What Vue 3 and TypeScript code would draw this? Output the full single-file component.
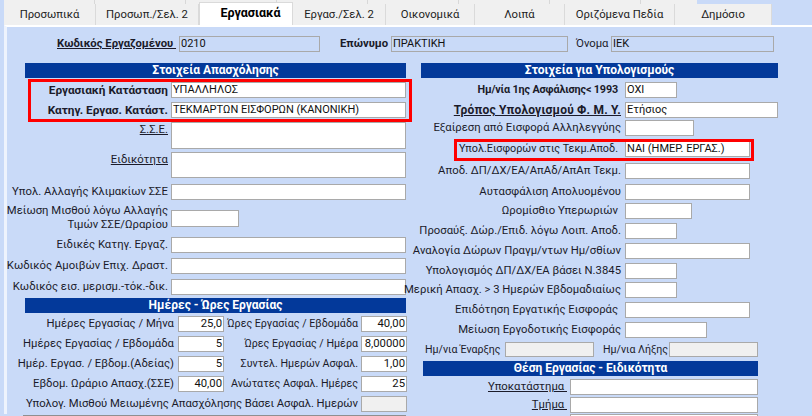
<script setup lang="ts">
type Row = { label: string; value?: string; top?: string; w?: string; h?: string; bold?: boolean; link?: boolean; boxed?: boolean; fit?: string }

const tabs = ['Προσωπικά', 'Προσωπ./Σελ. 2', 'Εργασιακά', 'Εργασ./Σελ. 2', 'Οικονομικά', 'Λοιπά', 'Οριζόμενα Πεδία', 'Δημόσιο']

const leftRows: Row[] = [
  { label: 'Σ.Σ.Ε.', link: true, h: 'h27' },
  { label: 'Ειδικότητα', link: true, h: 'h26', top: 'mt3' },
  { label: 'Υπολ. Αλλαγής Κλιμακίων ΣΣΕ', top: 'mt6' },
  { label: 'Μείωση Μισθού λόγω Αλλαγής Τιμών ΣΣΕ/Ωραρίου', w: 'w68', h: 'h17', top: 'mt4 tall' },
  { label: 'Ειδικές Κατηγ. Εργαζ.', top: 'mt5' },
  { label: 'Κωδικός Αμοιβών Επιχ. Δραστ.', top: 'mt5' },
  { label: 'Κωδικός εισ. μερισμ.-τόκ.-δικ.', top: 'mt5' }
]

const hours = [
  { a: 'Ημέρες Εργασίας / Μήνα', av: '25,0', b: 'Ώρες Εργασίας / Εβδομάδα', bv: '40,00' },
  { a: 'Ημέρες Εργασίας / Εβδομάδα', av: '5', b: 'Ώρες Εργασίας / Ημέρα', bv: '8,00000' },
  { a: 'Ημέρ. Εργασ. / Εβδομ.(Αδείας)', av: '5', b: 'Συντελ. Ημερών Ασφαλ.', bv: '1,00' },
  { a: 'Εβδομ. Ωράριο Απασχ.(ΣΣΕ)', av: '40,00', b: 'Ανώτατες Ασφαλ. Ημέρες', bv: '25' }
]

const rightTop: Row[] = [
  { label: 'Ημ/νία 1ης Ασφάλισης< 1993', value: 'ΟΧΙ', w: 'w52', bold: true, fit: 'tight inset' },
  { label: 'Τρόπος Υπολογισμού Φ. Μ. Υ.', value: 'Ετήσιος', w: 'w153', bold: true, link: true, top: 'mt4', fit: 'loose' },
  { label: 'Εξαίρεση από Εισφορά Αλληλεγγύης', w: 'w69', top: 'mt2' },
  { label: 'Υπολ.Εισφορών στις Τεκμ.Αποδ.', value: 'ΝΑΙ (ΗΜΕΡ. ΕΡΓΑΣ.)', w: 'w125', top: 'mt5', boxed: true, fit: 'inset squeeze' },
  { label: 'Αποδ. ΔΠ/ΔΧ/ΕΑ/ΑπΑδ/ΑπΑπ Τεκμ.', w: 'w125', top: 'mt6' },
  { label: 'Αυτασφάλιση Απολυομένου', w: 'w125', top: 'mt5' },
  { label: 'Ωρομίσθιο Υπερωριών', w: 'w67', top: 'mt3', fit: 'inset' },
  { label: 'Προσαύξ. Δώρ./Επιδ. λόγω Λοιπ. Αποδ.', w: 'w52', top: 'mt4' },
  { label: 'Αναλογία Δώρων Πραγμ/ντων Ημ/σθίων', w: 'w125', top: 'mt4' },
  { label: 'Υπολογισμός ΔΠ/ΔΧ/ΕΑ βάσει Ν.3845', w: 'w52', top: 'mt4' },
  { label: 'Μερική Απασχ. > 3 Ημερών Εβδομαδιαίως', w: 'w52', top: 'mt3' },
  { label: 'Επιδότηση Εργατικής Εισφοράς', w: 'w125', top: 'mt4', fit: 'inset' },
  { label: 'Μείωση Εργοδοτικής Εισφοράς', w: 'w82', top: 'mt4' }
]
</script>

<template>
  <div class="page">
    <div class="stubs">
      <span v-for="n in 7" :key="n" class="stub"></span>
    </div>
    <div class="tabs">
      <div v-for="(tab, i) in tabs" :key="tab" class="tab" :class="['t' + i, { active: i === 2 }]">{{ tab }}</div>
    </div>

    <div class="panel">
      <div class="head">
        <span class="lbl-code"><b class="u">Κωδικός Εργαζομένου&nbsp;</b></span>
        <div class="box ro code">0210</div>
        <b class="lbl-sur">Επώνυμο</b>
        <div class="box ro sur">ΠΡΑΚΤΙΚΗ</div>
        <span class="lbl-name">Όνομα</span>
        <div class="box ro name">ΙΕΚ</div>
      </div>

      <div class="cols">
        <section class="left">
          <h3 class="bar">Στοιχεία Απασχόλησης</h3>
          <div class="marked">
            <div class="row">
              <b class="lab">Εργασιακή Κατάσταση</b>
              <div class="box wide">ΥΠΑΛΛΗΛΟΣ</div>
            </div>
            <div class="row mt4">
              <b class="lab">Κατηγ. Εργασ. Κατάστ.</b>
              <div class="box wide">ΤΕΚΜΑΡΤΩΝ ΕΙΣΦΟΡΩΝ (ΚΑΝΟΝΙΚΗ)</div>
            </div>
          </div>
          <div
            v-for="row in leftRows"
            :key="row.label"
            class="row"
            :class="[row.top, { first: row.label === 'Σ.Σ.Ε.', start: row.link }]"
          >
            <span class="lab" :class="{ u: row.link }"><span :class="{ narrow: row.w }">{{ row.label }}</span></span>
            <div class="box" :class="[row.w || 'wide', row.h]"></div>
          </div>

          <h3 class="bar second">Ημέρες - Ώρες Εργασίας</h3>
          <div v-for="(line, i) in hours" :key="line.a" class="hours" :class="{ mt4: i > 0 }">
            <span class="hlab"><span>{{ line.a }}</span></span>
            <div class="box num">{{ line.av }}</div>
            <span class="hlab2"><span>{{ line.b }}</span></span>
            <div class="box num last">{{ line.bv }}</div>
          </div>
          <div class="hours mt4">
            <span class="hlab-full"><span>Υπολογ. Μισθού Μειωμένης Απασχόλησης Βάσει Ασφαλ. Ημερών</span></span>
            <div class="box num last ro-grey"></div>
          </div>
          <div class="rule"></div>
        </section>

        <section class="right">
          <h3 class="bar">Στοιχεία για Υπολογισμούς</h3>
          <div
            v-for="row in rightTop"
            :key="row.label"
            class="rrow"
            :class="[row.top, { marked2: row.boxed }]"
          >
            <span class="rlab" :class="row.fit">
              <component :is="row.bold ? 'b' : 'span'" :class="{ u: row.link }">{{ row.label }}</component>
            </span>
            <div class="box" :class="row.w">{{ row.value }}</div>
          </div>
          <div class="dates">
            <span>Ημ/νια Έναρξης</span>
            <div class="box ro-grey date"></div>
            <span class="end">Ημ/νια Λήξης</span>
            <div class="box ro-grey date"></div>
          </div>
          <h3 class="bar third">Θέση Εργασίας - Ειδικότητα</h3>
          <div class="brow">
            <span class="u">Υποκατάστημα&nbsp;</span>
            <div class="box bw"></div>
          </div>
          <div class="brow mt2">
            <span class="u">Τμήμα&nbsp;</span>
            <div class="box bw"></div>
          </div>
          <div class="brow mt1">
            <span></span>
            <div class="box bw"></div>
          </div>
        </section>
      </div>
    </div>
  </div>
</template>

<style>
html, body { margin: 0; height: 416px; overflow: hidden; background: #c9daf8; }
</style>

<style scoped>
.page { width: 812px; height: 416px; overflow: hidden; background: #c9daf8; font: 11.3px/16px Roboto, "Liberation Sans", Arial, sans-serif; color: #1b1b2a; }
.stubs { height: 4px; display: flex; margin-left: 4px; background: #f0f0f0; width: 693px; }
.stub { width: 90px; border-right: 1px solid #d8d8d8; }
.tabs { height: 21px; display: flex; margin-left: 4px; }
.tab { background: #f0f0f0; border-right: 1px solid #dadada; display: flex; align-items: center; justify-content: center; box-sizing: border-box; padding-top: 1px; color: #222; }
.t0 { width: 92px; } .t1 { width: 103px; } .t2 { width: 94px; } .t3 { width: 93px; }
.t4 { width: 89px; } .t5 { width: 90px; } .t6 { width: 110px; } .t7 { width: 97px; }
.tab.active { background: #fff; font-weight: bold; font-size: 12.5px; color: #000; margin-top: -2px; height: 23px; border: 1px solid #dadada; border-bottom: 0; padding: 0 0 2px 9px; }
.panel { margin-left: 4px; border-left: 3px solid #eef3fd; border-top: 2px solid #fff; padding-top: 9px; height: 389px; box-sizing: border-box; }

.head { display: flex; height: 16px; align-items: center; }
.u { text-decoration: underline; }
.lbl-code { margin-left: 50px; width: 122px; white-space: nowrap; }
.box { box-sizing: border-box; height: 16px; border: 1px solid #a9a9a9; background: #fff; padding: 0 1px; font: 11px/14px "Liberation Sans Narrow", Roboto, sans-serif; color: #111; white-space: nowrap; overflow: hidden; flex: none; }
.ro { background: transparent; }
.code { width: 141px; }
.lbl-sur { margin-left: 20px; width: 51px; }
.sur { width: 177px; }
.lbl-name { margin-left: 8px; width: 35px; }
.name { width: 163px; }

.cols { display: flex; margin-top: 11px; align-items: flex-start; }
.left { width: 381px; margin-left: 18px; }
.right { width: 357px; margin-left: 15px; }
.bar { margin: 0; height: 15px; background: #03399a; color: #fff; font-size: 12px; font-weight: bold; line-height: 15px; text-align: center; }

.marked { margin: 4px 0 0; position: relative; }
.marked::after { content: ""; position: absolute; left: 3px; right: -6px; top: -3px; bottom: -4px; border: 3px solid #f00; pointer-events: none; }
.row { display: flex; justify-content: flex-end; align-items: center; gap: 3px; }
.row.first { margin-top: 4px; }
.row.start { align-items: flex-start; }
.lab { flex: 1; text-align: right; white-space: nowrap; }
b.lab { font-size: 11.8px; }
.narrow { display: inline-block; white-space: normal; width: 170px; line-height: 14px; }
.wide { width: 235px; }
.tall { height: 28px; }
.row.tall .box { margin-right: 167px; }
.row.tall .lab { flex: none; width: 143px; display: flex; justify-content: flex-end; }
.row.tall .narrow { flex: none; }
.h27 { height: 27px; } .h26 { height: 26px; } .h17 { height: 17px; }
.w52 { width: 52px; } .w67 { width: 67px; } .w68 { width: 68px; } .w69 { width: 69px; } .w82 { width: 82px; } .w125 { width: 125px; } .w153 { width: 153px; }
.mt1 { margin-top: 1px; } .mt2 { margin-top: 2px; } .mt3 { margin-top: 3px; } .mt4 { margin-top: 4px; } .mt5 { margin-top: 5px; } .mt6 { margin-top: 6px; }

.second { margin-top: 3px; margin-bottom: 3px; }
.hours { display: flex; align-items: center; height: 16px; white-space: nowrap; }
.hlab, .hlab2, .hlab-full { display: flex; justify-content: flex-end; flex: none; }
.hlab > span, .hlab2 > span, .hlab-full > span { flex: none; }
.hlab { width: 149px; margin-right: 4px; }
.hlab2 { width: 134px; margin-right: 3px; font-size: 10.7px; }
.hlab-full { width: 333px; margin-right: 3px; letter-spacing: -0.06px; }
.num { width: 46px; text-align: right; padding: 0 1px; font: 11.3px/14px Roboto, "Liberation Sans", sans-serif; }
.ro-grey { background: #f0f0f0; }
.rule { margin: 3px 0 0 -2px; height: 1px; background: #8f8f8f; }

.rrow { display: flex; align-items: center; height: 16px; white-space: nowrap; }
.bar + .rrow { margin-top: 4px; }
.rlab { width: 200px; margin-right: 4px; display: flex; justify-content: flex-end; flex: none; }
.rlab > * { flex: none; }
.rlab.inset { padding-right: 3px; box-sizing: border-box; }
.rlab.squeeze { font-size: 10.8px; }
.rlab.tight b { font-size: 10.8px; letter-spacing: -0.15px; }
.rlab.loose b { font-size: 12px; letter-spacing: 0.2px; }
.marked2 { position: relative; }
.marked2::after { content: ""; position: absolute; left: 33px; width: 300px; top: -2px; bottom: -4px; border: 3px solid #f00; box-sizing: border-box; pointer-events: none; }
.dates { display: flex; align-items: center; height: 15px; margin-top: 4px; margin-left: 4px; white-space: nowrap; font-size: 10.6px; }
.dates span { width: 76px; margin-right: 4px; }
.dates .end { width: 62px; margin-left: 9px; }
.date { width: 89px; height: 15px; }
.third { margin: 4px 0 3px 2px; width: 335px; }
.brow { display: flex; justify-content: flex-end; height: 16px; gap: 3px; width: 337px; white-space: nowrap; }
.bw { width: 188px; }
</style>
